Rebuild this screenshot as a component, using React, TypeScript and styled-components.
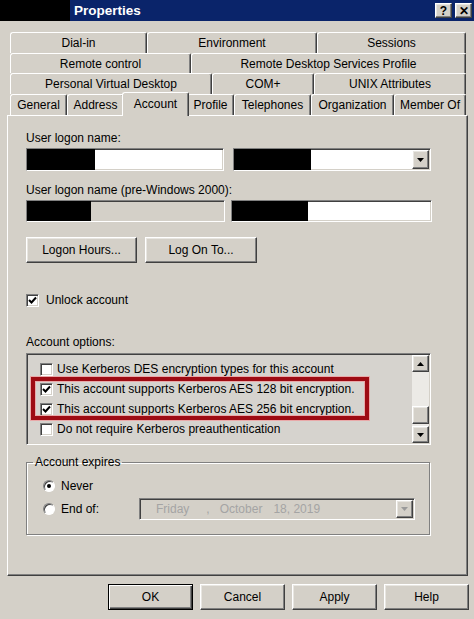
import React from "react";
import styled, { createGlobalStyle, css } from "styled-components";

const GlobalStyle = createGlobalStyle`
  html, body {
    margin: 0;
    padding: 0;
    background: #d4d0c8;
  }
  * {
    box-sizing: border-box;
  }
`;

const raised = css`
  border: 1px solid;
  border-color: #ffffff #404040 #404040 #ffffff;
  box-shadow: inset -1px -1px 0 #808080, inset 1px 1px 0 #e8e6e1;
  background: #d4d0c8;
`;

const sunken = css`
  border: 1px solid;
  border-color: #808080 #ffffff #ffffff #808080;
  box-shadow: inset 1px 1px 0 #404040, inset -1px -1px 0 #d4d0c8;
  padding: 1px;
`;

const Window = styled.div`
  width: 474px;
  height: 619px;
  background: #d4d0c8;
  font-family: "Liberation Sans", Arial, sans-serif;
  font-size: 12px;
  color: #000;
  display: flex;
  flex-direction: column;
  overflow: hidden;
`;

const TitleBar = styled.div`
  height: 21px;
  background: #0a246a;
  display: flex;
  align-items: center;
  padding-right: 2px;
`;

const TitleRedact = styled.div`
  width: 70px;
  height: 100%;
  background: #000;
`;

const TitleText = styled.div`
  flex: 1;
  margin-left: 4px;
  color: #fff;
  font-weight: bold;
  font-size: 13.5px;
`;

const CaptionButton = styled.div<{ $ml: number }>`
  ${raised};
  width: 17px;
  height: 15px;
  margin-left: ${(p) => p.$ml}px;
  display: flex;
  align-items: center;
  justify-content: center;
  font-weight: bold;
  font-size: 12px;
  line-height: 1;
`;

const Body = styled.div`
  padding: 11px 6px 0 7px;
`;

const TabStrip = styled.div`
  padding: 0 2px 0 3px;
`;

const TabRow = styled.div<{ $h: number }>`
  display: flex;
  height: ${(p) => p.$h}px;
`;

const Tab = styled.div<{ $w: number; $active?: boolean }>`
  width: ${(p) => p.$w}px;
  flex-shrink: 0;
  display: flex;
  align-items: center;
  justify-content: center;
  background: #d4d0c8;
  border-top: 1px solid #ffffff;
  border-left: 1px solid #ffffff;
  border-right: 1px solid #404040;
  box-shadow: inset -1px 0 0 #808080;
  border-top-left-radius: 3px;
  border-top-right-radius: 2px;
  white-space: nowrap;
  ${(p) =>
    p.$active &&
    css`
      position: relative;
      z-index: 2;
      width: ${p.$w + 4}px;
      margin: -2px -2px -1px;
      height: calc(100% + 3px);
      padding-bottom: 2px;
    `}
`;

const Panel = styled.div`
  height: 461px;
  background: #d4d0c8;
  border: 1px solid;
  border-color: #ffffff #404040 #404040 #ffffff;
  box-shadow: inset -1px -1px 0 #808080;
  padding: 15px 0 0 18px;
  display: flex;
  flex-direction: column;
  align-items: flex-start;
`;

const Label = styled.div<{ $mt: number }>`
  line-height: 14px;
  margin-top: ${(p) => p.$mt}px;
`;

const FieldRow = styled.div<{ $h: number; $gap: number; $mt: number }>`
  display: flex;
  gap: ${(p) => p.$gap}px;
  height: ${(p) => p.$h}px;
  margin-top: ${(p) => p.$mt}px;
`;

const TextBox = styled.div<{ $w: number; $disabled?: boolean }>`
  ${sunken};
  width: ${(p) => p.$w}px;
  height: 100%;
  background: ${(p) => (p.$disabled ? "#d4d0c8" : "#ffffff")};
  display: flex;
  align-items: stretch;
`;

const Redacted = styled.div<{ $w: number }>`
  width: ${(p) => p.$w}px;
  background: #000;
  margin: -1px 0 -1px -1px;
`;

const DropButton = styled.div`
  ${raised};
  width: 17px;
  margin-left: auto;
  display: flex;
  align-items: center;
  justify-content: center;
`;

const ButtonRow = styled.div<{ $mt: number; $gap: number }>`
  display: flex;
  gap: ${(p) => p.$gap}px;
  margin-top: ${(p) => p.$mt}px;
`;

const PushButton = styled.div<{ $w: number; $default?: boolean }>`
  ${raised};
  width: ${(p) => p.$w}px;
  height: 26px;
  display: flex;
  align-items: center;
  justify-content: center;
  ${(p) =>
    p.$default &&
    css`
      border-color: #000;
      box-shadow: inset 1px 1px 0 #fff, inset -1px -1px 0 #404040,
        inset -2px -2px 0 #808080;
    `}
`;

const CheckRow = styled.div<{ $mt: number }>`
  display: flex;
  align-items: center;
  gap: 7px;
  height: 16px;
  margin-top: ${(p) => p.$mt}px;
`;

const Box = styled.div`
  ${sunken};
  padding: 0;
  width: 13px;
  height: 13px;
  background: #fff;
  display: flex;
  align-items: center;
  justify-content: center;
  flex-shrink: 0;
`;

const ListBox = styled.div`
  ${sunken};
  position: relative;
  margin-top: 4px;
  width: 405px;
  height: 92px;
  background: #d6d3ce;
  display: flex;
`;

const ListItems = styled.div`
  flex: 1;
  padding-top: 4px;
  overflow: hidden;
`;

const ListItem = styled.div`
  height: 20px;
  display: flex;
  align-items: center;
  gap: 4px;
  padding-left: 12px;
  white-space: nowrap;
`;

const ScrollBar = styled.div`
  width: 17px;
  display: flex;
  flex-direction: column;
`;

const ScrollButton = styled.div`
  ${raised};
  height: 17px;
  display: flex;
  align-items: center;
  justify-content: center;
`;

const ScrollTrack = styled.div`
  flex: 1;
  background: #eceae6;
  display: flex;
  flex-direction: column;
  justify-content: flex-end;
  padding-bottom: 2px;
`;

const ScrollThumb = styled.div`
  ${raised};
  height: 18px;
`;

const Highlight = styled.div`
  position: absolute;
  left: 4px;
  top: 23px;
  width: 338px;
  height: 43px;
  border: 4px solid #9e0b13;
  box-shadow: 0 0 0 1px #e9a9a9, inset 0 0 0 1px #e9a9a9;
  pointer-events: none;
`;

const Group = styled.fieldset`
  margin: 10px 0 0;
  padding: 0;
  width: 404px;
  height: 80px;
  border: 1px solid #808080;
  box-shadow: inset 1px 1px 0 #fff, 1px 1px 0 #fff;
  min-width: 0;
`;

const Legend = styled.legend`
  margin-left: 6px;
  padding: 0 2px;
  line-height: 14px;
`;

const RadioRow = styled.div<{ $mt: number; $h: number }>`
  display: flex;
  align-items: center;
  height: ${(p) => p.$h}px;
  margin-top: ${(p) => p.$mt}px;
  padding-left: 16px;
`;

const Radio = styled.div`
  width: 12px;
  height: 12px;
  border-radius: 50%;
  border: 1px solid;
  border-color: #808080 #ffffff #ffffff #808080;
  box-shadow: inset 1px 1px 0 #404040;
  background: #fff;
  display: flex;
  align-items: center;
  justify-content: center;
  flex-shrink: 0;
`;

const Dot = styled.div`
  width: 4px;
  height: 4px;
  border-radius: 50%;
  background: #000;
`;

const RadioLabel = styled.div<{ $w?: number }>`
  margin-left: 6px;
  width: ${(p) => (p.$w ? `${p.$w}px` : "auto")};
`;

const DatePicker = styled.div`
  ${sunken};
  width: 276px;
  height: 100%;
  background: #d4d0c8;
  display: flex;
  align-items: center;
  padding-left: 16px;
  color: #a4a4a4;
`;

const DatePart = styled.span<{ $ml: number }>`
  margin-left: ${(p) => p.$ml}px;
`;

const DateDrop = styled(DropButton)`
  height: 100%;
`;

const DialogButtons = styled.div`
  display: flex;
  justify-content: flex-end;
  gap: 7px;
  padding: 8px 5px 0 0;
`;

const Arrow = ({ dir = "down", color = "#000" }: { dir?: "up" | "down"; color?: string }) => (
  <svg width="7" height="4" viewBox="0 0 7 4">
    {dir === "down" ? (
      <polygon points="0,0 7,0 3.5,4" fill={color} />
    ) : (
      <polygon points="0,4 7,4 3.5,0" fill={color} />
    )}
  </svg>
);

const Check = () => (
  <svg width="9" height="9" viewBox="0 0 9 9">
    <polyline points="1,4 3.5,6.5 8,1.5" fill="none" stroke="#000" strokeWidth="2" />
  </svg>
);

const CheckBox = ({ checked }: { checked?: boolean }) => <Box>{checked && <Check />}</Box>;

const tabRows: { h: number; tabs: { label: string; w: number; active?: boolean }[] }[] = [
  {
    h: 21,
    tabs: [
      { label: "Dial-in", w: 137 },
      { label: "Environment", w: 170 },
      { label: "Sessions", w: 149 },
    ],
  },
  {
    h: 20,
    tabs: [
      { label: "Remote control", w: 181 },
      { label: "Remote Desktop Services Profile", w: 275 },
    ],
  },
  {
    h: 21,
    tabs: [
      { label: "Personal Virtual Desktop", w: 202 },
      { label: "COM+", w: 102 },
      { label: "UNIX Attributes", w: 152 },
    ],
  },
  {
    h: 21,
    tabs: [
      { label: "General", w: 57 },
      { label: "Address", w: 57 },
      { label: "Account", w: 63, active: true },
      { label: "Profile", w: 47 },
      { label: "Telephones", w: 77 },
      { label: "Organization", w: 83 },
      { label: "Member Of", w: 72 },
    ],
  },
];

const options = [
  { label: "Use Kerberos DES encryption types for this account", checked: false },
  { label: "This account supports Kerberos AES 128 bit encryption.", checked: true },
  { label: "This account supports Kerberos AES 256 bit encryption.", checked: true },
  { label: "Do not require Kerberos preauthentication", checked: false },
];

export default function App() {
  return (
    <>
      <GlobalStyle />
      <Window>
        <TitleBar>
          <TitleRedact />
          <TitleText>Properties</TitleText>
          <CaptionButton $ml={0}>?</CaptionButton>
          <CaptionButton $ml={3}>✕</CaptionButton>
        </TitleBar>

        <Body>
          <TabStrip>
            {tabRows.map((row, i) => (
              <TabRow key={i} $h={row.h}>
                {row.tabs.map((t) => (
                  <Tab key={t.label} $w={t.w} $active={t.active}>
                    {t.label}
                  </Tab>
                ))}
              </TabRow>
            ))}
          </TabStrip>

          <Panel>
            <Label $mt={0}>User logon name:</Label>
            <FieldRow $h={23} $gap={9} $mt={3}>
              <TextBox $w={198}>
                <Redacted $w={68} />
              </TextBox>
              <TextBox $w={198}>
                <Redacted $w={77} />
                <DropButton>
                  <Arrow />
                </DropButton>
              </TextBox>
            </FieldRow>

            <Label $mt={12}>User logon name (pre-Windows 2000):</Label>
            <FieldRow $h={22} $gap={6} $mt={3}>
              <TextBox $w={199} $disabled>
                <Redacted $w={64} />
              </TextBox>
              <TextBox $w={201}>
                <Redacted $w={76} />
              </TextBox>
            </FieldRow>

            <ButtonRow $mt={15} $gap={8}>
              <PushButton $w={111}>Logon Hours...</PushButton>
              <PushButton $w={112}>Log On To...</PushButton>
            </ButtonRow>

            <CheckRow $mt={29}>
              <CheckBox checked />
              Unlock account
            </CheckRow>

            <Label $mt={27}>Account options:</Label>
            <ListBox>
              <ListItems>
                {options.map((o) => (
                  <ListItem key={o.label}>
                    <CheckBox checked={o.checked} />
                    {o.label}
                  </ListItem>
                ))}
              </ListItems>
              <ScrollBar>
                <ScrollButton>
                  <Arrow dir="up" />
                </ScrollButton>
                <ScrollTrack>
                  <ScrollThumb />
                </ScrollTrack>
                <ScrollButton>
                  <Arrow />
                </ScrollButton>
              </ScrollBar>
              <Highlight />
            </ListBox>

            <Group>
              <Legend>Account expires</Legend>
              <RadioRow $mt={8} $h={18}>
                <Radio>
                  <Dot />
                </Radio>
                <RadioLabel>Never</RadioLabel>
              </RadioRow>
              <RadioRow $mt={3} $h={22}>
                <Radio />
                <RadioLabel $w={78}>End of:</RadioLabel>
                <DatePicker>
                  <DatePart $ml={0}>Friday</DatePart>
                  <DatePart $ml={17}>,</DatePart>
                  <DatePart $ml={10}>October</DatePart>
                  <DatePart $ml={11}>18, 2019</DatePart>
                  <DateDrop>
                    <Arrow color="#9a9a9a" />
                  </DateDrop>
                </DatePicker>
              </RadioRow>
            </Group>
          </Panel>
        </Body>

        <DialogButtons>
          <PushButton $w={85} $default>
            OK
          </PushButton>
          <PushButton $w={85}>Cancel</PushButton>
          <PushButton $w={85}>Apply</PushButton>
          <PushButton $w={85}>Help</PushButton>
        </DialogButtons>
      </Window>
    </>
  );
}
